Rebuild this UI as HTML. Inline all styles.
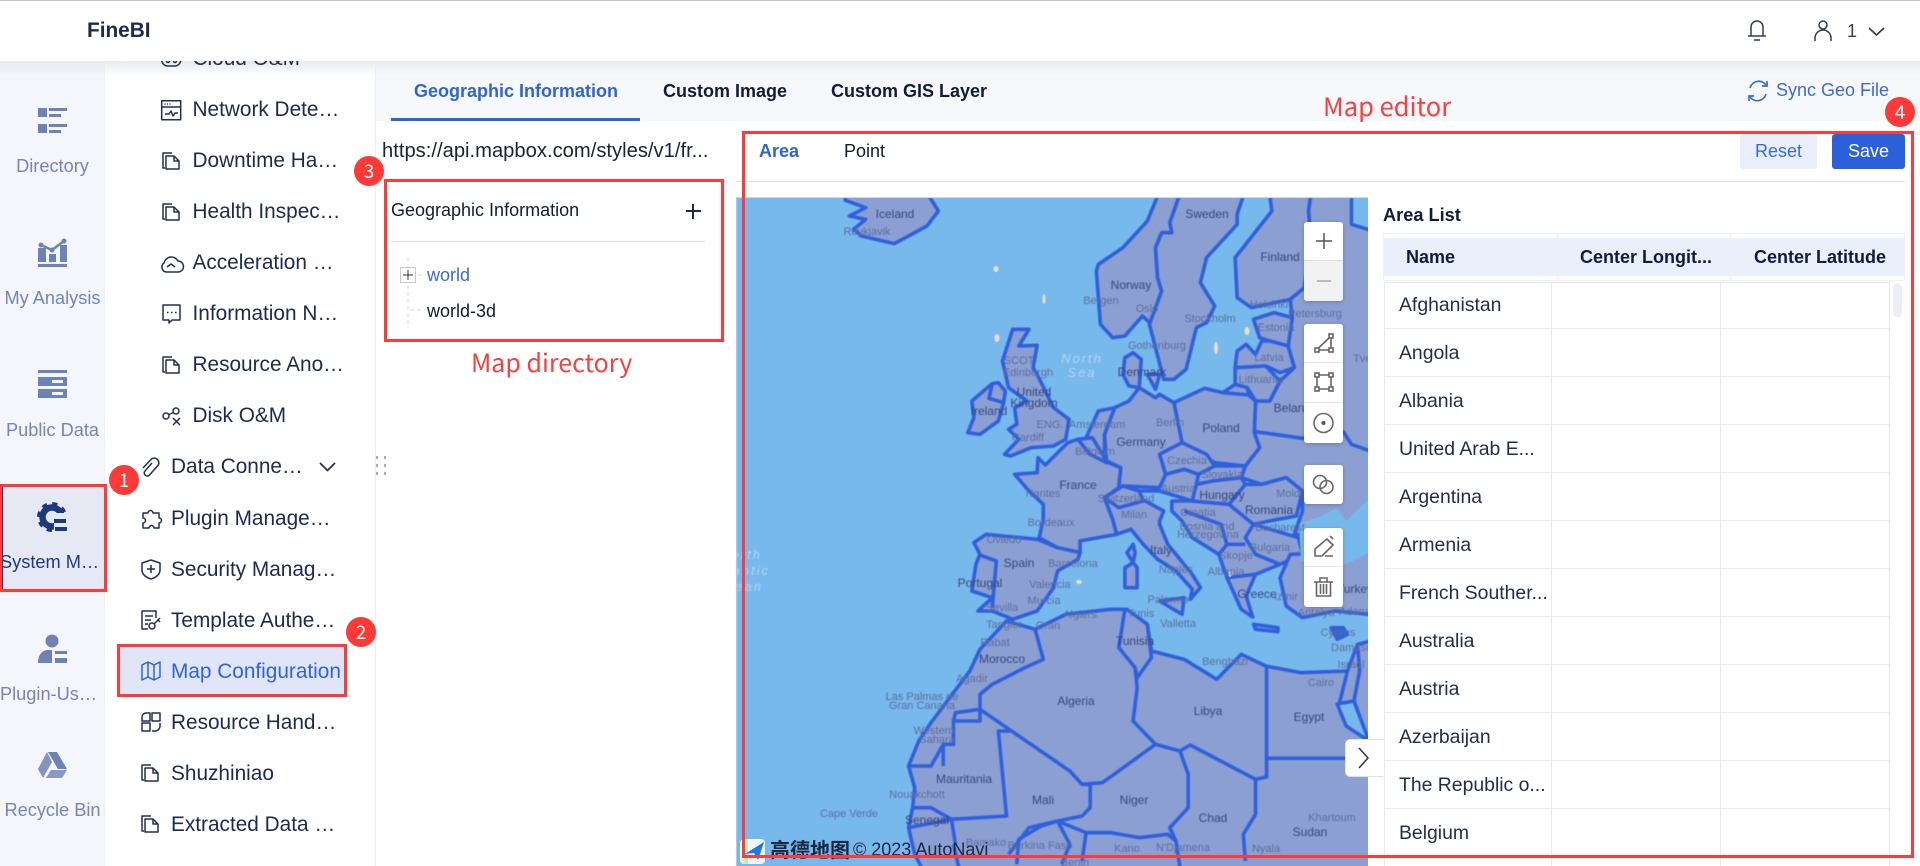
<!DOCTYPE html>
<html lang="en"><head><meta charset="utf-8"><title>FineBI</title>
<style>
*{box-sizing:border-box}
html,body{margin:0;padding:0;width:1920px;height:866px;overflow:hidden;background:#fff;font-family:"Liberation Sans","Noto Sans CJK SC",sans-serif;color:#1b2b50}
.a{position:absolute}
.t{position:absolute;white-space:nowrap;line-height:24px;height:24px}
.rail{font-size:18.2px;color:#7486b8;text-align:center}
.nav{font-size:20.8px;color:#1b2b50;line-height:28px;height:28px}
.b{font-size:18px;font-weight:bold;color:#0f1c3a}
.r{font-size:19.4px;color:#1f2d4f;left:1399px}
.lab{position:absolute;color:#ff3b3b;font-family:"Noto Sans CJK SC",sans-serif;white-space:nowrap;line-height:32px}
.bd{position:absolute;width:30px;height:30px;border-radius:50%;background:#ff3838;color:#fff;text-align:center;line-height:30px;font-size:19px;font-family:"Noto Sans CJK SC",sans-serif}
.rb{position:absolute;border:3px solid #ff3a3a}
.tb{position:absolute;left:1304px;width:39px;background:#fff;border-radius:3px;box-shadow:0 1px 4px rgba(0,0,0,.22)}
.hl{position:absolute;height:1px;background:#e8eaf0}
.vl{position:absolute;width:1px;background:#e8eaf0}
svg{position:absolute;left:0;top:0}
.ic{fill:none;stroke:#1f3057;stroke-width:1.5;stroke-linejoin:round}
.m polygon,.m polyline{vector-effect:non-scaling-stroke;stroke:#2f60dc;stroke-width:3.6;stroke-linejoin:round}
.m polygon{fill:#8c9fd3}
.m polyline{fill:none}
.ml text{font:12px "Liberation Sans",sans-serif;fill:#34477c;text-anchor:middle}
.ml text.c{font-size:11px;fill:#5d6e9f}
.ml text.w{font-style:italic;fill:#b5d4f2;font-size:13px;letter-spacing:2px}
.tl{fill:none;stroke:#666;stroke-width:1.6}
</style></head><body>

<!-- backgrounds -->
<div class="a" style="left:0;top:61px;width:105px;height:805px;background:#f4f6fb;border-right:1px solid #edeff5"></div>
<div class="a" style="left:375px;top:61px;width:1px;height:805px;background:#eceef3"></div>
<div class="a" style="left:376px;top:61px;width:1544px;height:60px;background:#f7f8fc"></div>
<div class="a" style="left:2px;top:487px;width:103px;height:103px;background:#e6e9f4;border-left:1.500px solid #1e3a7a"></div>
<div class="a" style="left:120px;top:647px;width:224px;height:47px;background:#e0e6f8"></div>
<div class="a" style="left:0;top:61px;width:1920px;height:15px;background:linear-gradient(#e7e9ee,rgba(240,242,246,0))"></div>

<!-- rail text -->
<div class="t rail" style="left:0;width:105px;top:154px">Directory</div>
<div class="t rail" style="left:0;width:105px;top:286px">My Analysis</div>
<div class="t rail" style="left:0;width:105px;top:418px">Public Data</div>
<div class="t rail" style="left:0;width:98px;top:550px;color:#1e3a7a">System M…</div>
<div class="t rail" style="left:0;width:96px;top:682px">Plugin-Us…</div>
<div class="t rail" style="left:0;width:105px;top:798px">Recycle Bin</div>

<!-- nav text -->
<div class="t nav" style="left:192.500px;top:45px">Cloud O&amp;M</div>
<div class="t nav" style="left:192.500px;top:96px">Network Dete…</div>
<div class="t nav" style="left:192.500px;top:147px">Downtime Ha…</div>
<div class="t nav" style="left:192.500px;top:198px">Health Inspec…</div>
<div class="t nav" style="left:192.500px;top:249px">Acceleration …</div>
<div class="t nav" style="left:192.500px;top:300px">Information N…</div>
<div class="t nav" style="left:192.500px;top:351px">Resource Ano…</div>
<div class="t nav" style="left:192.500px;top:402px">Disk O&amp;M</div>
<div class="t nav" style="left:171px;top:453px">Data Conne…</div>
<div class="t nav" style="left:171px;top:505px">Plugin Manage…</div>
<div class="t nav" style="left:171px;top:556px">Security Manag…</div>
<div class="t nav" style="left:171px;top:607px">Template Authe…</div>
<div class="t nav" style="left:171px;top:658px;color:#2f63dc">Map Configuration</div>
<div class="t nav" style="left:171px;top:709px">Resource Hand…</div>
<div class="t nav" style="left:171px;top:760px">Shuzhiniao</div>
<div class="t nav" style="left:171px;top:811px">Extracted Data …</div>
<svg width="400" height="100" viewBox="0 0 400 100"><g class="ic"><rect x="161.700" y="48" width="19" height="18" rx="6"/><circle cx="168" cy="61" r="1.500"/><circle cx="175" cy="61" r="1.500"/></g></svg>

<!-- tabs -->
<div class="t b" style="left:414px;top:79px;color:#2f63dc">Geographic Information</div>
<div class="t b" style="left:663px;top:79px">Custom Image</div>
<div class="t b" style="left:831px;top:79px">Custom GIS Layer</div>
<div class="a" style="left:391px;top:118px;width:249px;height:3px;background:#2f63dc"></div>
<div class="t" style="left:1776px;top:78px;font-size:18px;color:#3b69dd">Sync Geo File</div>

<!-- left tree -->
<div class="t" style="left:382px;top:139px;font-size:20.200px;color:#1a2238">https://api.mapbox.com/styles/v1/fr...</div>
<div class="t" style="left:391px;top:198px;font-size:18px;color:#101c38">Geographic Information</div>
<div class="hl" style="left:391px;top:241px;width:314px;background:#e0e2e8"></div>
<div class="t" style="left:427px;top:263px;font-size:18px;color:#3b69dd">world</div>
<div class="t" style="left:427px;top:299px;font-size:18px;color:#101c38">world-3d</div>

<!-- editor head -->
<div class="t b" style="left:759px;top:139px;color:#2f63dc">Area</div>
<div class="t" style="left:844px;top:139px;font-size:18px;color:#101c38">Point</div>
<div class="hl" style="left:736px;top:181px;width:1169px;background:#e0e2e8"></div>
<div class="a" style="left:1740px;top:134px;width:77px;height:35px;background:#e8eefa;border-radius:3px;color:#3b69dd;font-size:18px;line-height:35px;text-align:center">Reset</div>
<div class="a" style="left:1832px;top:134px;width:73px;height:35px;background:#2c60da;border-radius:3px;color:#fff;font-size:18px;line-height:35px;text-align:center">Save</div>

<!-- map -->
<div class="a" style="left:736px;top:197px;width:632px;height:669px;background:#77b9ec;overflow:hidden;border-left:1px solid #b9c6da;border-top:1px solid #cfd6e2">
<svg width="632" height="669" viewBox="736 197 632 669" style="left:0;top:0;filter:blur(.45px)">
<g class="m" transform="translate(730,190) scale(.4082,.33333)">
<polygon points="280,28 330,50 290,75 330,85 300,115 320,135 400,158 480,105 508,60 485,15 280,15"/>
<polygon points="1045,15 1020,90 960,170 900,220 895,240 905,400 935,440 965,435 1008,375 1030,400 1055,300 1045,260 1040,170 1055,125 1080,125 1075,95 1098,15"/>
<polygon points="1098,15 1075,95 1080,125 1055,125 1040,170 1045,260 1055,300 1025,400 1060,565 1085,565 1115,535 1140,410 1165,395 1185,345 1150,275 1165,200 1240,100 1240,70 1255,15"/>
<polygon points="1320,15 1325,60 1235,200 1240,320 1275,350 1370,325 1405,290 1420,130 1415,60 1420,15"/>
<polygon points="1420,15 1415,60 1420,130 1405,290 1370,325 1375,380 1365,465 1380,530 1345,570 1320,630 1285,630 1282,725 1295,770 1260,825 1250,860 1300,880 1360,860 1400,900 1400,960 1380,1030 1600,1040 1600,130 1520,100 1520,15"/>
<polyline points="1285,722 1400,742 1500,722 1520,760 1600,795"/>
<polygon points="1280,385 1330,365 1375,380 1365,465 1320,450 1295,440"/>
<polygon points="1240,480 1262,460 1285,490 1300,450 1320,450 1365,465 1380,530 1345,545 1310,525 1235,530"/>
<polygon points="1235,530 1310,525 1345,570 1320,630 1285,630 1265,590 1235,580"/>
<polygon points="1205,605 1235,580 1265,590 1268,612"/>
<polygon points="1085,635 1160,592 1205,605 1268,612 1285,630 1282,725 1295,770 1260,825 1185,815 1105,755"/>
<polygon points="690,415 730,415 705,465 750,463 740,530 750,550 790,650 828,685 820,745 790,765 735,770 685,795 670,790 705,745 680,715 700,700 695,650 725,630 680,590 665,510"/>
<polygon points="640,578 655,575 672,600 668,635 655,690 610,730 580,725 595,680 590,630"/>
<polyline points="640,578 632,622 668,635"/>
<polygon points="695,850 750,845 752,800 770,822 825,755 850,745 880,790 925,815 955,830 950,890 915,920 935,985 945,1030 855,1050 855,1085 800,1070 755,1040 765,985 765,940 730,900"/>
<polygon points="595,1055 625,1030 750,1045 800,1070 855,1085 850,1105 800,1140 790,1190 750,1260 690,1285 640,1260 605,1260 640,1220 590,1200 600,1120 610,1090"/>
<polyline points="605,1090 650,1110 640,1250"/>
<polygon points="915,920 1000,920 1060,960 1050,990 1050,1000 1070,1060 1130,1150 1150,1190 1125,1225 1130,1195 1090,1140 1045,1105 1010,1060 980,1015 945,1030 935,985"/>
<polygon points="985,1060 970,1085 985,1115 965,1130 965,1190 995,1190 995,1130 985,1115 990,1085"/>
<polygon points="1050,1230 1110,1220 1105,1270"/>
<polygon points="975,630 1000,590 1040,620 1050,610 1085,635 1105,755 1050,790 1065,850 1050,890 950,890 955,830 920,810 915,730 940,650"/>
<polygon points="965,500 985,485 1005,505 1000,590 975,585 960,550"/>
<polygon points="1020,550 1050,550 1040,595"/>
<polygon points="870,740 900,660 940,650 915,730 915,800 885,740"/>
<polygon points="850,745 885,740 915,800 920,815 880,790"/>
<polygon points="1050,790 1105,755 1165,790 1185,825 1145,850 1110,835 1065,850"/>
<polygon points="1145,850 1185,825 1260,825 1250,860 1180,870 1140,880"/>
<polygon points="1065,850 1110,835 1145,850 1140,880 1130,930 1050,900 1000,900 960,885 1050,890"/>
<polygon points="915,920 960,885 1000,900 1010,930 950,950"/>
<polygon points="1080,930 1130,930 1220,940 1280,1000 1390,1040 1400,1090 1345,1120 1285,1150 1262,1215 1278,1278 1250,1255 1215,1160 1195,1090 1130,1040 1105,990 1080,960"/>
<polyline points="1280,1000 1260,1040 1285,1090 1345,1120"/>
<polyline points="1195,1090 1215,1060 1260,1060"/>
<polyline points="1110,960 1200,1000 1215,1060"/>
<polyline points="1215,1160 1285,1150"/>
<polygon points="1140,880 1180,870 1250,860 1260,880 1220,940 1130,930"/>
<polygon points="1260,880 1300,880 1360,860 1400,900 1385,975 1340,985 1280,1000 1220,940"/>
<polygon points="1345,1160 1370,1090 1600,1080 1600,1275 1480,1260 1400,1280 1360,1245"/>
<polygon points="1280,1300 1340,1310 1340,1322 1285,1315"/>
<polygon points="1470,1310 1500,1310 1510,1330 1485,1345" style="fill:#2f60dc"/>
<polygon points="675,1290 610,1375 585,1440 545,1505 490,1595 460,1650 435,1725 450,1790 445,1850 435,1910 450,1990 480,2060 1600,2060 1600,1340 1535,1360 1510,1440 1395,1445 1310,1425 1250,1390 1190,1465 1110,1405 1030,1380 1020,1300 970,1255 930,1255 820,1270 745,1315"/>
<polyline points="745,1315 765,1405 720,1430 640,1480 610,1510 610,1555 550,1565 545,1590"/>
<polyline points="435,1725 490,1725 520,1660 545,1660 545,1590 610,1590 610,1555"/>
<polyline points="520,1660 520,1725"/>
<polyline points="610,1555 830,1740 860,1780 910,1775 1040,1660 985,1590 995,1490 990,1430 950,1370 965,1255"/>
<polyline points="990,1430 995,1460 1030,1400 1020,1300"/>
<polyline points="685,1620 655,1620 675,1875 540,1885 490,1850 445,1850"/>
<polyline points="860,1780 880,1780 880,1850 860,1875 800,1890 730,1910 680,1990"/>
<polyline points="435,1910 540,1885 550,1960"/>
<polyline points="800,1890 870,1925 930,1925 1000,1940 1070,1930 1090,1950 1075,1910 1120,1850 1120,1750 1100,1680 1040,1660"/>
<polyline points="1100,1680 1125,1662 1285,1765 1312,1758 1312,1425"/>
<polyline points="1312,1702 1600,1702"/>
<polyline points="1285,1765 1285,1870 1255,1930 1260,2010"/>
<polyline points="860,2010 870,1925"/>
<polyline points="1090,1950 1100,2030"/>
<polyline points="700,2020 705,1945 760,1905 800,1890 830,1960 810,2020"/>
<polyline points="560,2040 545,1960"/>
<polyline points="1510,1440 1490,1540"/>
<polyline points="1535,1360 1540,1440 1526,1530"/>
<polygon points="1485,1539 1526,1530 1563,1650 1507,1605" style="fill:#77b9ec"/>
</g>
<polygon points="1298,523 1320,515 1336,507 1345,520 1368,498 1368,552 1345,563 1300,560" fill="#77b9ec"/>
<g fill="#ecdfc0">
<ellipse cx="995" cy="268" rx="2.500" ry="3"/><ellipse cx="1043" cy="298" rx="1.500" ry="5"/><ellipse cx="996" cy="337" rx="2.500" ry="4"/><ellipse cx="1215" cy="347" rx="2" ry="6"/><ellipse cx="1246" cy="330" rx="2.500" ry="4"/><ellipse cx="1078" cy="581" rx="3" ry="2"/><ellipse cx="1229" cy="573" rx="1.500" ry="3"/>
</g>
<g class="ml">
<text x="894" y="217">Iceland</text><text class="c" x="866" y="234">Reykjavik</text><text x="1206" y="217">Sweden</text><text x="1279" y="260">Finland</text><text x="1130" y="288">Norway</text><text class="c" x="1100" y="303">Bergen</text><text class="c" x="1146" y="311">Oslo</text><text class="c" x="1209" y="321">Stockholm</text><text class="c" x="1268" y="307">Helsinki</text><text class="c" x="1314" y="316">Petersburg</text><text class="c" x="1275" y="330">Estonia</text><text class="c" x="1268" y="360">Latvia</text><text class="c" x="1260" y="382">Lithuania</text><text x="1293" y="411">Belarus</text><text class="c" x="1363" y="361">Tver</text><text class="c" x="1156" y="348">Gothenburg</text><text x="1141" y="375">Denmark</text>
<text class="w" x="1081" y="362">North</text><text class="w" x="1081" y="376">Sea</text>
<text class="c" x="1019" y="363">SCOT.</text><text class="c" x="1027" y="375">Edinburgh</text><text x="1033" y="395">United</text><text x="1033" y="406">Kingdom</text><text class="c" x="1049" y="427">ENG.</text><text x="988" y="414">Ireland</text><text class="c" x="1027" y="440">Cardiff</text><text class="c" x="1096" y="427">Amsterdam</text><text class="c" x="1169" y="425">Berlin</text><text x="1220" y="431">Poland</text><text x="1140" y="445">Germany</text><text class="c" x="1094" y="454">Belgium</text><text class="c" x="1186" y="463">Czechia</text><text class="c" x="1221" y="477">Slovakia</text><text x="1077" y="488">France</text><text class="c" x="1042" y="496">Nantes</text><text class="c" x="1125" y="501">Switzerland</text><text class="c" x="1177" y="491">Austria</text><text x="1221" y="498">Hungary</text><text x="1268" y="513">Romania</text><text class="c" x="1296" y="496">Moldova</text><text class="c" x="1133" y="517">Milan</text><text class="c" x="1197" y="515">Croatia</text><text class="c" x="1050" y="525">Bordeaux</text><text class="c" x="1206" y="529">Bosnia and</text><text class="c" x="1207" y="537">Herzegovina</text><text class="c" x="1279" y="530">Bucharest</text>
<text class="c" x="1003" y="542">Oviedo</text><text x="1018" y="566">Spain</text><text class="c" x="1072" y="566">Barcelona</text><text x="979" y="586">Portugal</text><text class="c" x="1049" y="587">Valencia</text><text class="c" x="1043" y="603">Murcia</text><text class="c" x="1001" y="610">Sevilla</text><text class="c" x="1003" y="627">Tangier</text><text class="c" x="1047" y="628">Oran</text><text class="c" x="1079" y="617">Algiers</text><text class="c" x="1140" y="616">Tunis</text><text class="c" x="994" y="645">Rabat</text><text x="1001" y="662">Morocco</text><text class="c" x="971" y="681">Agadir</text><text class="c" x="921" y="699">Las Palmas de</text><text class="c" x="921" y="708">Gran Canaria</text><text class="c" x="933" y="733">Western</text><text class="c" x="936" y="742">Sahara</text><text x="963" y="782">Mauritania</text><text class="c" x="916" y="797">Nouakchott</text><text class="c" x="848" y="816">Cape Verde</text><text x="926" y="823">Senegal</text><text x="1042" y="803">Mali</text><text x="1133" y="803">Niger</text><text x="1212" y="821">Chad</text><text x="1207" y="714">Libya</text><text x="1075" y="704">Algeria</text><text x="1308" y="720">Egypt</text><text class="c" x="1320" y="685">Cairo</text><text class="c" x="1331" y="820">Khartoum</text><text x="1309" y="835">Sudan</text><text class="c" x="1265" y="851">Nyala</text><text class="c" x="1039" y="848">Burkina Faso</text><text class="c" x="985" y="845">Bamako</text><text class="c" x="1126" y="851">Kano</text><text class="c" x="1182" y="850">N'Djamena</text><text class="c" x="1074" y="865">Benin</text><text x="1160" y="553">Italy</text><text class="c" x="1175" y="572">Naples</text><text class="c" x="1167" y="602">Palermo</text><text class="c" x="1177" y="626">Valletta</text><text x="1134" y="644">Tunisia</text><text class="c" x="1224" y="664">Benghazi</text><text class="c" x="1225" y="574">Albania</text><text class="c" x="1235" y="558">Skopje</text><text class="c" x="1269" y="550">Bulgaria</text><text x="1256" y="597">Greece</text><text class="c" x="1285" y="599">Izmir</text><text x="1354" y="592">Turkey</text><text class="c" x="1315" y="615">Antalya</text><text class="c" x="1354" y="614">Adana</text><text class="c" x="1337" y="635">Cyprus</text><text class="c" x="1356" y="650">Damascus</text><text class="c" x="1350" y="667">Israel</text>
<text class="w" x="761" y="558" style="text-anchor:end">North</text><text class="w" x="769" y="574" style="text-anchor:end">Atlantic</text><text class="w" x="762" y="590" style="text-anchor:end">Ocean</text>
</g>
</svg>
<svg width="632" height="669" viewBox="736 197 632 669" style="left:0;top:0">
<rect x="739" y="838" width="25" height="25" rx="4" fill="#eef8f2"/>
<rect x="741" y="838" width="3" height="25" fill="#dff0a8"/><rect x="744" y="838" width="3" height="25" fill="#bfe8d0"/>
<polygon points="744,853 763,841 757,859 753,852" fill="#1677ee"/>
<text x="769" y="856" font-size="20" font-weight="bold" font-family="'Noto Sans CJK SC',sans-serif" fill="#1c2740">高德地图</text>
<text x="852" y="854.500" font-size="18" font-family="'Liberation Sans',sans-serif" fill="#1c2740">© 2023 AutoNavi</text>
</svg>
</div>

<!-- map toolbars -->
<div class="tb" style="top:222px;height:79px;overflow:hidden"><div style="height:39px;border-bottom:1px solid #dcdcdc"></div><div style="height:40px;background:#f2f2f2"></div></div>
<div class="tb" style="top:324px;height:119px"><div style="height:39px;border-bottom:1px solid #e8e8e8"></div><div style="height:40px;border-bottom:1px solid #e8e8e8"></div></div>
<div class="tb" style="top:465px;height:39px"></div>
<div class="tb" style="top:528px;height:79px"><div style="height:39px;border-bottom:1px solid #e8e8e8"></div></div>
<div class="a" style="left:1345px;top:739px;width:38px;height:38px;background:#fff;border:1px solid #dfe2ea;border-right:none;border-radius:5px 0 0 5px"></div>

<!-- right table -->
<div class="t b" style="left:1383px;top:203px;font-size:18.200px">Area List</div>
<div class="a" style="left:1383px;top:233px;width:522px;height:48px;background:#fff;border:1px solid #eef0f5"></div>
<div class="a" style="left:1384px;top:238px;width:521px;height:38px;background:#e9f0fb"></div>
<div class="vl" style="left:1557px;top:233px;height:48px;background:#eef0f5"></div>
<div class="vl" style="left:1730px;top:233px;height:48px;background:#eef0f5"></div>
<div class="t b" style="left:1406px;top:245px">Name</div>
<div class="t b" style="left:1580px;top:245px">Center Longit...</div>
<div class="t b" style="left:1754px;top:245px">Center Latitude</div>
<div class="vl" style="left:1384px;top:282px;height:584px"></div>
<div class="vl" style="left:1551px;top:282px;height:584px"></div>
<div class="vl" style="left:1720px;top:282px;height:584px"></div>
<div class="vl" style="left:1889px;top:282px;height:584px"></div>
<div class="hl" style="left:1384px;top:282px;width:505px"></div>
<div class="hl" style="left:1384px;top:328px;width:505px"></div>
<div class="hl" style="left:1384px;top:376px;width:505px"></div>
<div class="hl" style="left:1384px;top:424px;width:505px"></div>
<div class="hl" style="left:1384px;top:472px;width:505px"></div>
<div class="hl" style="left:1384px;top:520px;width:505px"></div>
<div class="hl" style="left:1384px;top:568px;width:505px"></div>
<div class="hl" style="left:1384px;top:616px;width:505px"></div>
<div class="hl" style="left:1384px;top:664px;width:505px"></div>
<div class="hl" style="left:1384px;top:712px;width:505px"></div>
<div class="hl" style="left:1384px;top:760px;width:505px"></div>
<div class="hl" style="left:1384px;top:808px;width:505px"></div>
<div class="t r" style="top:293px">Afghanistan</div>
<div class="t r" style="top:341px">Angola</div>
<div class="t r" style="top:389px">Albania</div>
<div class="t r" style="top:437px">United Arab E...</div>
<div class="t r" style="top:485px">Argentina</div>
<div class="t r" style="top:533px">Armenia</div>
<div class="t r" style="top:581px">French Souther...</div>
<div class="t r" style="top:629px">Australia</div>
<div class="t r" style="top:677px">Austria</div>
<div class="t r" style="top:725px">Azerbaijan</div>
<div class="t r" style="top:773px">The Republic o...</div>
<div class="t r" style="top:821px">Belgium</div>
<div class="a" style="left:1893px;top:284px;width:9px;height:33px;background:#eceef3;border-radius:4px"></div>

<!-- top bar -->
<div class="a" style="left:0;top:0;width:1920px;height:61px;background:#fff;border-top:1px solid #c4c4c4"></div>
<div class="t" style="left:87px;top:19px;font-size:20.800px;font-weight:bold;color:#1b2b4f">FineBI</div>
<div class="t" style="left:1847px;top:19px;font-size:18px;color:#333c50">1</div>

<!-- icons -->
<svg width="1920" height="866" viewBox="0 0 1920 866">
<!-- header icons -->
<g class="ic" style="stroke:#333c50">
<path d="M1751 36V27a6 6 0 0 1 12 0v9M1748 36h18M1754 40h6"/>
<circle cx="1823" cy="25" r="4"/><path d="M1815 41v-3a8 8 0 0 1 16 0v3"/>
<path d="M1869 28l7.500 7 7.500-7" style="stroke-width:1.700"/>
</g>
<!-- sync -->
<g fill="none" stroke="#3b69dd" stroke-width="1.700"><path d="M1750 88a9 9 0 0 1 16-3M1766 94a9 9 0 0 1-16 3"/><path d="M1767 81v5h-5M1749 101v-5h5"/></g>
<!-- rail -->
<g fill="#6f82b5">
<rect x="38" y="108" width="9" height="9"/><rect x="49" y="108" width="18" height="3"/><rect x="49" y="114" width="12" height="3"/>
<rect x="38" y="124" width="9" height="9"/><rect x="49" y="124" width="18" height="3"/><rect x="49" y="130" width="12" height="3"/>
<rect x="38" y="248" width="8" height="14"/><rect x="49" y="254" width="7" height="8"/><rect x="60" y="245" width="7" height="17"/><rect x="38" y="264" width="29" height="3"/>
<circle cx="41" cy="245" r="2.500"/><circle cx="52" cy="250" r="2.500"/><circle cx="64" cy="241" r="2.500"/>
<path d="M41 245L52 250L64 241" fill="none" stroke="#6f82b5" stroke-width="2.500"/>
<rect x="38" y="370" width="29" height="3"/><rect x="38" y="377" width="29" height="9"/><rect x="38" y="389" width="29" height="9"/>
<circle cx="52" cy="641" r="6.500"/><path d="M38 663C38 655 42 650 48 650H52V663Z"/><rect x="55" y="651" width="12" height="3"/><rect x="55" y="658" width="12" height="5"/>
<path d="M47 752L38 769L43 778L52 762Z" opacity=".85"/><path d="M48 752H57L67 769H58Z"/><path d="M46 778L51 770H67L62 778Z" opacity=".8"/>
</g>
<rect x="52" y="380" width="11" height="3" fill="#f4f6fb"/><rect x="52" y="392" width="11" height="3" fill="#f4f6fb"/>
<circle cx="52" cy="517" r="9.500" fill="none" stroke="#1e3a7a" stroke-width="6.500"/>
<circle cx="52" cy="517" r="13.500" fill="none" stroke="#1e3a7a" stroke-width="3" stroke-dasharray="5.300 5.300"/>
<rect x="54" y="513" width="16" height="20" fill="#e6e9f4"/>
<rect x="54" y="519" width="12" height="4" fill="#1e3a7a"/><rect x="55" y="527" width="12" height="4" fill="#1e3a7a"/>

<!-- nav icons -->
<g class="ic" transform="translate(161,100)"><rect x=".7" y=".7" width="19" height="19"/><path d="M1 7h19M4 14h4l2-3 2 5 2-3h3M3.500 4h1M6 4h1M8.500 4h1"/></g>
<g class="ic" transform="translate(162,152)"><path d="M3 16H1V1H10M4 17V4H12L17 9V17Z M12 4V9H17"/></g>
<g class="ic" transform="translate(162,203)"><path d="M3 16H1V1H10M4 17V4H12L17 9V17Z M12 4V9H17"/></g>
<g class="ic" transform="translate(161,253)"><path d="M5 19A5 5 0 0 1 3 10A7.500 7.500 0 0 1 17 8A5.500 5.500 0 0 1 17 19Z M6 14l4-3 4 3"/></g>
<g class="ic" transform="translate(162,304)"><path d="M1 1H18V16H10L7 19V16H1Z M5 8.500h1.500M9 8.500h1.500M13 8.500h1.500"/></g>
<g class="ic" transform="translate(162,356)"><path d="M3 16H1V1H10M4 17V4H12L17 9V17Z M12 4V9H17"/></g>
<g class="ic" transform="translate(162,407)"><circle cx="4" cy="9" r="3"/><circle cx="14" cy="4" r="3"/><path d="M7 7.500L11.500 5.500M11 11L18 18M18 11L11 18"/></g>
<g class="ic" transform="translate(141,457)"><path d="M11 6L4 14a3 3 0 0 0 4.500 4L16.500 9a4.500 4.500 0 0 0-6.500-6.500L2 11"/></g>
<g class="ic" transform="translate(141,509)"><path d="M7 4a2.500 2.500 0 0 1 5 0h6v5a2.500 2.500 0 0 1 0 5v5h-5a2.500 2.500 0 0 0-5 0H2v-5a2.500 2.500 0 0 0 0-5V4z"/></g>
<g class="ic" transform="translate(141,559)"><path d="M10 1L19 4V11C19 16 14 19 10 20C6 19 1 16 1 11V4Z M10 6V14 M6 10H14"/></g>
<g class="ic" transform="translate(141,610)"><path d="M15 8V1H1V19H7M4 6H12M4 10H10M4 14H7M13 14L19 8M17 10l2 2"/><circle cx="11" cy="16" r="3"/></g>
<g class="ic" transform="translate(141,661)" style="stroke:#2f63dc"><path d="M1 4L7 1L13 4L19 1V16L13 19L7 16L1 19Z M7 1V16 M13 4V19"/></g>
<g class="ic" transform="translate(141,712)"><path d="M1 9V5a4 4 0 0 1 4-4h4v8z M11 1h8v8h-8z M1 11h8v8H1z M19 11v3a5 5 0 0 1-5 5h-3"/></g>
<g class="ic" transform="translate(141,764)"><path d="M3 16H1V1H10M4 17V4H12L17 9V17Z M12 4V9H17"/></g>
<g class="ic" transform="translate(141,815)"><path d="M3 16H1V1H10M4 17V4H12L17 9V17Z M12 4V9H17"/></g>
<path class="ic" d="M320 463l7.500 7.500 7.500-7.500" style="stroke-width:1.800"/>
<g fill="#a8aeba"><rect x="376" y="456" width="2" height="3"/><rect x="376" y="464" width="2" height="3"/><rect x="376" y="472" width="2" height="3"/><rect x="384" y="456" width="2" height="3"/><rect x="384" y="464" width="2" height="3"/><rect x="384" y="472" width="2" height="3"/></g>

<!-- tree + plus -->
<path d="M686 211h15M693 204v15" stroke="#1b2b50" stroke-width="2" fill="none"/>
<path d="M408 257V328" stroke="#d5d8de" stroke-dasharray="4 3" fill="none"/>
<path d="M418 275H426M410 310H426" stroke="#cfd2d9" stroke-dasharray="4 3" fill="none"/>
<rect x="400.500" y="267.500" width="15" height="15" fill="#fff" stroke="#c6cbd6"/>
<path d="M403 275h10M408 270v10" stroke="#333" fill="none"/>

<!-- map tools -->
<path d="M1316 241h16M1324 233v16" stroke="#555" stroke-width="1.500" fill="none"/>
<path d="M1317 281h14" stroke="#bbb" stroke-width="2" fill="none"/>
<g class="tl">
<path d="M1317 350h14M1317.500 349L1330 337M1331 337v13"/><rect x="1315" y="348" width="4" height="4" fill="#fff"/><rect x="1329" y="348" width="4" height="4" fill="#fff"/><rect x="1329" y="334" width="4" height="4" fill="#fff"/>
<path d="M1317 375h14M1317 389h14M1317 375v14M1331 375v14"/><rect x="1315" y="373" width="4" height="4" fill="#fff"/><rect x="1329" y="373" width="4" height="4" fill="#fff"/><rect x="1315" y="387" width="4" height="4" fill="#fff"/><rect x="1329" y="387" width="4" height="4" fill="#fff"/>
<circle cx="1323.500" cy="423" r="9.500"/>
<circle cx="1320" cy="482" r="6.500"/><circle cx="1326.500" cy="487" r="6.500"/>
<path d="M1315 556V549L1327 539L1333 545L1322 556ZM1325 556h8M1330 536l3 3"/>
<path d="M1314 582h19M1320 582v-4h7v4M1316.500 582v14h14v-14M1320.500 584v10M1323.500 584v10M1326.500 584v10"/>
</g>
<circle cx="1323.500" cy="423" r="2" fill="#555"/>
<path d="M1359 748l9 10-9 10" fill="none" stroke="#333" stroke-width="1.500"/>
</svg>

<!-- annotations -->
<div class="rb" style="left:-1px;top:484px;width:108px;height:108px"></div>
<div class="rb" style="left:117px;top:644px;width:230px;height:53px"></div>
<div class="rb" style="left:384px;top:179px;width:340px;height:163px"></div>
<div class="rb" style="left:742px;top:131px;width:1172px;height:727px"></div>
<div class="lab" style="left:471px;top:346px;font-size:25px">Map directory</div>
<div class="lab" style="left:1323px;top:90px;font-size:25.500px">Map editor</div>
<div class="bd" style="left:109px;top:465px">1</div>
<div class="bd" style="left:346px;top:617px">2</div>
<div class="bd" style="left:354px;top:156px">3</div>
<div class="bd" style="left:1885px;top:97px">4</div>
</body></html>
